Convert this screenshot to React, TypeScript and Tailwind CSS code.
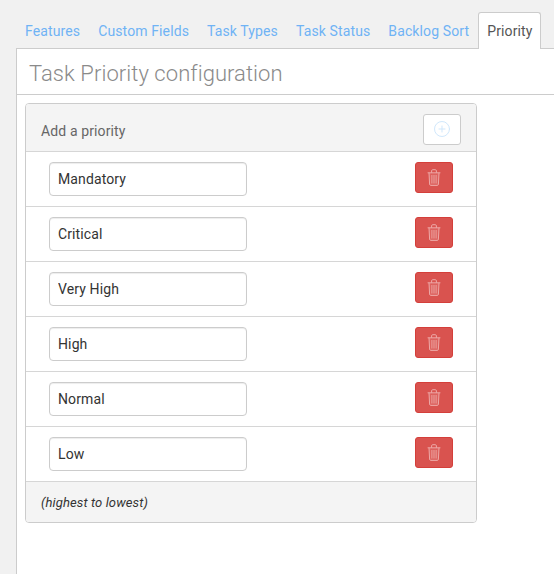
import { CirclePlus } from "lucide-react";

const tabs = ["Features", "Custom Fields", "Task Types", "Task Status", "Backlog Sort"];
const priorities = ["Mandatory", "Critical", "Very High", "High", "Normal", "Low"];

function TrashIcon() {
  return (
    <svg width="14" height="17" viewBox="0 0 14 17" fill="none" stroke="currentColor" strokeWidth="1">
      <path d="M2 4h10l-.6 11c0 .8-.4 1.3-1 1.3H3.600c-.6 0-1-.5-1-1.300z" fill="currentColor" fillOpacity="0.18" stroke="none" />
      <path d="M.6 3.800h12.800" />
      <path d="M4.600 3.800V2c0-.7.4-1.300 1-1.300h2.800c.6 0 1 .6 1 1.300v1.800" />
      <path d="M2 3.800l.6 11.300c0 .7.4 1.300 1 1.300h6.800c.6 0 1-.6 1-1.300L12 3.800" />
      <path d="M4.900 6v8.500M7 6v8.500M9.100 6v8.500" strokeWidth="0.9" />
    </svg>
  );
}

export default function App() {
  return (
    <div className="h-[574px] w-[554px] overflow-hidden bg-[#f1f1f1] pl-[16px] pt-[12px] font-['Roboto',sans-serif] text-[14px] tracking-[0.12px] text-[#333]">
      {/* tabs */}
      <ul className="relative z-10 flex h-[36px]">
        {tabs.map((tab) => (
          <li key={tab} className="border border-transparent px-[8px] pt-[10px] leading-[16px] text-[#6fb3f5]">
            {tab}
          </li>
        ))}
        <li className="h-[37px] rounded-t-[3px] border border-b-0 border-[#cccccc] bg-white px-[8px] pt-[10px] leading-[16px] text-[#555]">
          Priority
        </li>
      </ul>

      <div className="h-[526px] border-l border-t border-[#cccccc] bg-white">
        <h1 className="h-[46px] border-b border-[#cccccc] pl-[12px] pt-[10px] text-[22px] leading-[30px] font-light tracking-[0.06px] text-[#8a8a8a]">
          Task Priority configuration
        </h1>

        <div className="ml-[8px] mt-[8px] w-[452px] overflow-hidden rounded-[4px] border border-[#cccccc]">
          <div className="flex h-[48px] items-center justify-between border-b border-[#d6d6d6] bg-[#f4f4f4] pl-[15px] pr-[15px]">
            <span className="pt-[7px] text-[#666]">Add a priority</span>
            <button className="mt-[3px] flex h-[31px] w-[38px] items-center justify-center rounded-[3px] border border-[#cccccc] bg-white text-[#cfe6fb]">
              <CirclePlus size={18} strokeWidth={1.3} />
            </button>
          </div>

          {priorities.map((name) => (
            <div
              key={name}
              className="flex h-[55px] items-start justify-between border-b border-[#d6d6d6] pl-[23px] pr-[23px] pt-[10px]"
            >
              <input
                readOnly
                value={name}
                className="h-[34px] w-[198px] rounded-[4px] border border-[#cccccc] bg-white px-[8px] font-['Roboto',sans-serif] text-[14px] tracking-[0.12px] text-[#333] shadow-[inset_0_1px_1px_rgba(0,0,0,0.075)] outline-none"
              />
              <button className="flex h-[31px] w-[38px] items-center justify-center rounded-[3px] border border-[#d43f3a] bg-[#d9534f] text-[#eda9a7]">
                <TrashIcon />
              </button>
            </div>
          ))}

          <div className="flex h-[40px] items-center bg-[#f4f4f4] pl-[15px] pt-[2px] text-[13px] italic text-[#333]">
            (highest to lowest)
          </div>
        </div>
      </div>
    </div>
  );
}
